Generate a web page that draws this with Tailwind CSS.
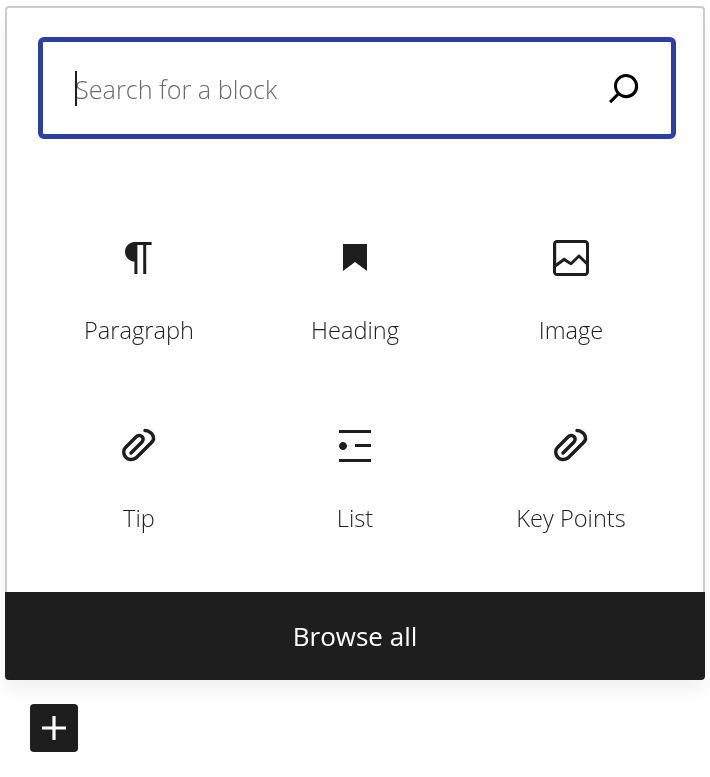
<!DOCTYPE html>
<html lang="en">
<head>
    <meta charset="UTF-8">
    <title>Block inserter</title>
    <script src="https://cdn.jsdelivr.net/npm/@tailwindcss/browser@4"></script>
</head>
<body class="bg-white font-['Open_Sans',sans-serif] text-[#1e1e1e]">
    <div class="pt-[6px] pl-[5px] will-change-transform">
        <!-- Inserter panel -->
        <div class="w-[700px] rounded-[4px] shadow-[0_12px_16px_rgba(0,0,0,0.05)]">
            <div class="border-2 border-b-0 border-[#cccccc] rounded-t-[4px] px-[24px] pt-[29px] pb-[30px]">
                <div class="relative ml-[7px] mr-[3px] h-[102px] border-[5px] border-[#2f3ea1] rounded-[6px] flex items-center pl-[32px] pr-[20px]">
                    <span class="absolute left-[32px] top-[29px] w-[2px] h-[35px] bg-[#1e1e1e]"></span>
                    <input type="text" placeholder="Search for a block" class="flex-1 outline-none text-[25.2px] leading-[36px] mt-[2px] font-[350] placeholder-[#6a6a6a]">
                    <svg class="w-[48px] h-[48px] mr-[3px]" viewBox="0 0 24 24" fill="currentColor"><path class="fill-black" d="M13 5c-3.3 0-6 2.7-6 6 0 1.4.5 2.7 1.3 3.7l-3.8 3.8 1.1 1.1 3.8-3.8c1 .8 2.3 1.3 3.7 1.3 3.3 0 6-2.7 6-6S16.3 5 13 5zm0 10.5c-2.5 0-4.5-2-4.5-4.5s2-4.5 4.5-4.5 4.5 2 4.5 4.5-2 4.5-4.5 4.5z"/></svg>
                </div>
                <!-- Block grid -->
                <div class="grid grid-cols-3 gap-y-[48px] mt-[95px]">
                    <div class="h-[140px] flex flex-col items-center">
                        <svg class="w-[48px] h-[48px]" viewBox="0 0 24 24" fill="currentColor"><path d="M18.3 4H9.9v-.1l-.9.2c-2.3.4-4 2.4-4 4.8s1.7 4.4 4 4.8l.7.1V20h1.5V5.5h2.9V20h1.5V5.5h2.7V4z"/></svg>
                        <span class="mt-[32px] text-[23.6px] leading-[32px] font-[350]">Paragraph</span>
                    </div>
                    <div class="h-[140px] flex flex-col items-center">
                        <svg class="w-[48px] h-[48px]" viewBox="0 0 24 24" fill="currentColor"><path d="M6 5h12v13.5L12 14l-6 4.5z"/></svg>
                        <span class="mt-[32px] text-[23.6px] leading-[32px] font-[350]">Heading</span>
                    </div>
                    <div class="h-[140px] flex flex-col items-center">
                        <svg class="w-[48px] h-[48px]" viewBox="0 0 24 24" fill="currentColor"><path d="M19 3H5c-1.1 0-2 .9-2 2v14c0 1.1.9 2 2 2h14c1.1 0 2-.9 2-2V5c0-1.1-.9-2-2-2zM5 4.5h14c.3 0 .5.2.5.5v8.4l-3-2.9c-.3-.3-.8-.3-1 0L11.9 14 9 12c-.3-.2-.6-.2-.8 0l-3.6 2.6V5c-.1-.3.1-.5.4-.5zm14 15H5c-.3 0-.5-.2-.5-.5v-2.4l4.1-3 3 1.9c.3.2.7.2.9-.1L16 12l3.5 3.4V19c0 .3-.2.5-.5.5z"/></svg>
                        <span class="mt-[32px] text-[23.6px] leading-[32px] font-[350]">Image</span>
                    </div>
                    <div class="h-[140px] flex flex-col items-center">
                        <svg class="w-[48px] h-[48px]" viewBox="0 0 48 48" fill="none" stroke="currentColor" stroke-width="3.5" stroke-linecap="round"><path d="M30 8.5C33 8.5 38 11 38.5 15.5C39 18 37.5 19.5 36.5 20.5L21.5 35.5C19 38 14 38.5 11 35.5C8 32.5 8 28 10.5 25.5L21 15C23 13 25.5 13 27 14.5C28.5 16 28.5 18.5 27 20L16 31"/></svg>
                        <span class="mt-[32px] text-[23.6px] leading-[32px] font-[350]">Tip</span>
                    </div>
                    <div class="h-[140px] flex flex-col items-center">
                        <svg class="w-[48px] h-[48px]" viewBox="0 0 24 24" fill="currentColor"><path d="M4 4v1.5h16V4H4zm8 8.5h8V11h-8v1.5zM4 20h16v-1.5H4V20zm4-8c0-1.1-.9-2-2-2s-2 .9-2 2 .9 2 2 2 2-.9 2-2z"/></svg>
                        <span class="mt-[32px] text-[23.6px] leading-[32px] font-[350]">List</span>
                    </div>
                    <div class="h-[140px] flex flex-col items-center">
                        <svg class="w-[48px] h-[48px]" viewBox="0 0 48 48" fill="none" stroke="currentColor" stroke-width="3.5" stroke-linecap="round"><path d="M30 8.5C33 8.5 38 11 38.5 15.5C39 18 37.5 19.5 36.5 20.5L21.5 35.5C19 38 14 38.5 11 35.5C8 32.5 8 28 10.5 25.5L21 15C23 13 25.5 13 27 14.5C28.5 16 28.5 18.5 27 20L16 31"/></svg>
                        <span class="mt-[32px] text-[23.6px] leading-[32px] font-[350]">Key Points</span>
                    </div>
                </div>
            </div>
            <div class="h-[88px] bg-[#1e1e1e] rounded-b-[4px] flex items-center justify-center text-white text-[26px]">Browse all</div>
        </div>
        <!-- Add block button -->
        <button class="mt-[24px] ml-[25px] w-[48px] h-[48px] bg-[#1e1e1e] rounded-[4px] flex items-center justify-center text-white">
            <svg class="w-[48px] h-[48px]" viewBox="0 0 24 24" fill="currentColor"><path d="M18 11.2h-5.2V6h-1.6v5.2H6v1.6h5.2V18h1.6v-5.2H18z"/></svg>
        </button>
    </div>
</body>
</html>
